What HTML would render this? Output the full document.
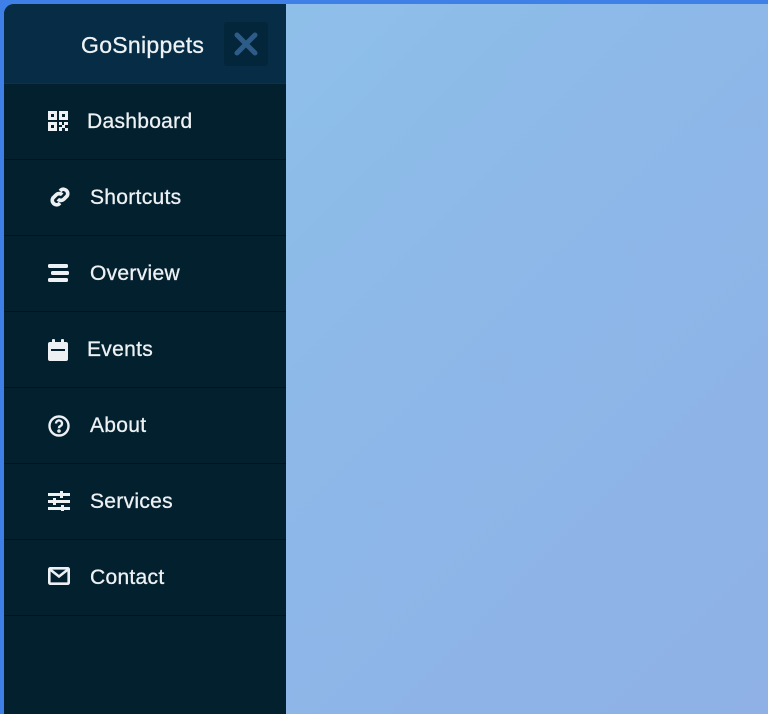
<!DOCTYPE html>
<html><head><meta charset="utf-8"><style>
html,body{margin:0;padding:0;width:768px;height:714px;overflow:hidden}
body{background:#3f7fe8;font-family:"Liberation Sans",sans-serif;position:relative}
.main{position:absolute;left:4px;top:4px;right:0;bottom:0;border-top-left-radius:10px;background:linear-gradient(135deg,#8ec4ea 0%,#8db8e8 50%,#8fb1e6 100%)}
.side{position:absolute;left:4px;top:4px;width:282px;bottom:0;background:#03202f;border-top-left-radius:10px;overflow:hidden}
.head{height:79px;background:#062d45;position:relative;border-bottom:1px solid #0c3448}
.head .t{position:absolute;left:77px;top:28px;color:#eef2f4;font-size:23px;letter-spacing:0.3px;-webkit-text-stroke:0.3px #eef2f4}
.head .x{position:absolute;left:220px;top:18px;width:44px;height:44px;background:#04263a;border-radius:3px}
.item{height:75px;border-bottom:1px solid #01131c;position:relative;color:#edf1f3;font-size:21px;letter-spacing:0.3px;-webkit-text-stroke:0.3px #edf1f3}
.item span{position:absolute;left:86px;top:26px}
.item svg{position:absolute;left:44px;top:27px}
</style></head><body>
<div class="main"></div>
<div class="side">
<div class="head"><div class="t">GoSnippets</div>
<div class="x"><svg width="44" height="44" viewBox="0 0 44 44"><path d="M13 13L31 31M31 13L13 31" stroke="#2d5c88" stroke-width="5" stroke-linecap="round"/></svg></div></div>
<div class="item"><svg width="20" height="20" viewBox="0 0 20 20" fill="#edf1f3"><path d="M0 0h9v9H0zM3 3v3h3V3zM11 0h9v9h-9zM14 3v3h3V3zM0 11h9v9H0zM3 14v3h3v-3zM11 11h3v3h-3zM16 11h4v3h-4zM11 16h3v4h-3zM14 14h3v3h-3zM17 17h3v3h-3z"/></svg><span style="left:83px">Dashboard</span></div>
<div class="item"><svg width="24" height="24" viewBox="0 0 22 22" fill="none" stroke="#edf1f3" stroke-width="3.4" style="top:25px"><path d="M9 13a4 4 0 0 0 5.5 0l3-3a4 4 0 0 0-5.5-5.5l-1 1"/><path d="M13 9a4 4 0 0 0-5.5 0l-3 3a4 4 0 0 0 5.5 5.5l1-1"/></svg><span>Shortcuts</span></div>
<div class="item"><svg width="22" height="20" viewBox="0 0 22 20" fill="#edf1f3"><rect x="0" y="1" width="20" height="4" rx="1.5"/><rect x="3" y="8" width="18" height="4" rx="1.5"/><rect x="0" y="15" width="20" height="4" rx="1.5"/></svg><span>Overview</span></div>
<div class="item"><svg width="20" height="22" viewBox="0 0 20 22" fill="#edf1f3"><rect x="4" y="0" width="3" height="5" rx="1"/><rect x="13" y="0" width="3" height="5" rx="1"/><path d="M0 5a2 2 0 0 1 2-2h16a2 2 0 0 1 2 2v15a2 2 0 0 1-2 2H2a2 2 0 0 1-2-2zM3 10v2h14v-2z"/></svg><span style="left:83px">Events</span></div>
<div class="item"><svg width="22" height="22" viewBox="0 0 22 22" fill="none" stroke="#edf1f3" stroke-width="2.4"><circle cx="11" cy="11" r="9.5"/><path d="M8 8.5a3 3 0 1 1 4 2.8c-.8.4-1 1-1 2"/><circle cx="11" cy="16" r=".6" fill="#edf1f3"/></svg><span>About</span></div>
<div class="item"><svg width="22" height="20" viewBox="0 0 22 20" fill="#edf1f3"><rect x="0" y="2" width="22" height="3"/><rect x="12" y="0" width="3" height="7"/><rect x="0" y="9" width="22" height="3"/><rect x="5" y="7" width="3" height="7"/><rect x="0" y="16" width="22" height="3"/><rect x="13" y="14" width="3" height="6"/></svg><span>Services</span></div>
<div class="item"><svg width="22" height="18" viewBox="0 0 22 18" fill="none" stroke="#edf1f3" stroke-width="2.6"><rect x="1.3" y="1.3" width="19.4" height="15.4" rx="1"/><path d="M1.5 2l9.5 7.5L20.5 2"/></svg><span>Contact</span></div>
</div>
</body></html>
